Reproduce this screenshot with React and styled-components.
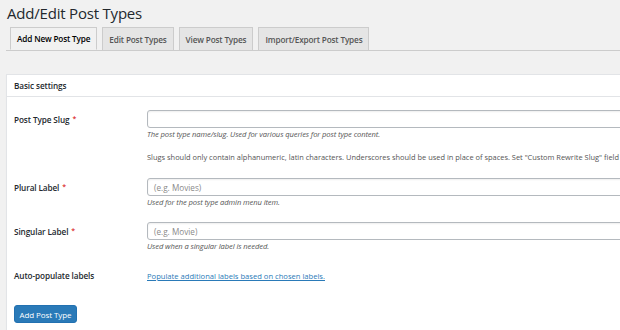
import React from 'react';
import styled, { createGlobalStyle } from 'styled-components';

const GlobalStyle = createGlobalStyle`
  html, body {
    margin: 0;
    padding: 0;
    background: #f1f1f1;
    overflow: hidden;
  }
  body {
    font-family: "Open Sans", "Noto Sans", sans-serif;
    color: #23282d;
  }
`;

const Page = styled.div`
  width: 620px;
  height: 330px;
  overflow: hidden;
`;

const Title = styled.h1`
  margin: 0;
  padding: 3px 0 0 7px;
  font-size: 15px;
  line-height: 20px;
  font-weight: 400;
  letter-spacing: -0.2px;
  color: #23282d;
`;

const TabBar = styled.div`
  display: flex;
  gap: 5px;
  margin: 4px 0 0 6px;
  padding-left: 4px;
  border-bottom: 1px solid #ccc;
`;

const Tab = styled.div`
  height: 23px;
  box-sizing: border-box;
  padding: 0 6px;
  display: flex;
  align-items: center;
  font-size: 8.2px;
  font-weight: 600;
  letter-spacing: -0.15px;
  color: ${p => (p.$active ? '#000' : '#555')};
  background: ${p => (p.$active ? '#f1f1f1' : '#e5e5e5')};
  border: 1px solid #ccc;
  border-bottom: ${p => (p.$active ? '1px solid #f1f1f1' : 'none')};
  margin-bottom: ${p => (p.$active ? '-1px' : '0')};
`;

const Panel = styled.div`
  margin: 23px 0 0 6px;
  width: 700px;
  background: #fff;
  border: 1px solid #e2e4e7;
  border-right: none;
  box-shadow: 0 1px 1px rgba(0, 0, 0, 0.04);
`;

const PanelHeader = styled.div`
  height: 21px;
  display: flex;
  align-items: center;
  padding-left: 7px;
  font-size: 8.2px;
  font-weight: 600;
  letter-spacing: -0.1px;
  color: #23282d;
  border-bottom: 1px solid #e2e4e7;
`;

const Body = styled.div`
  padding: 13px 0 20px 7px;
`;

const Row = styled.div`
  display: grid;
  grid-template-columns: 133px 1fr;
  margin-top: ${p => p.$gap || 0}px;
`;

const Label = styled.div`
  font-size: 8.2px;
  font-weight: 600;
  letter-spacing: -0.1px;
  line-height: 18px;
  height: 18px;
  color: #23282d;
`;

const Req = styled.span`
  color: #dc3232;
  font-size: 7px;
  margin-left: 3px;
  vertical-align: 2px;
`;

const Input = styled.div`
  height: 18px;
  box-sizing: border-box;
  border: 1px solid #b4b9be;
  border-radius: 3px;
  box-shadow: inset 0 1px 2px rgba(0, 0, 0, 0.07);
  background: #fff;
  padding-left: 6px;
  display: flex;
  align-items: center;
  font-size: 8.2px;
  color: #8a8a8a;
`;

const Desc = styled.div`
  font-size: 7.6px;
  font-style: italic;
  line-height: 11px;
  height: 11px;
  margin-top: 1px;
  letter-spacing: -0.1px;
  color: #555;
`;

const Note = styled.div`
  font-size: 7.45px;
  line-height: 11px;
  height: 11px;
  margin-top: 12px;
  color: #555;
  white-space: nowrap;
`;

const Link = styled.a`
  display: block;
  font-size: 7.6px;
  line-height: 18px;
  height: 18px;
  color: #2a7ab8;
  text-decoration: underline;
`;

const Button = styled.button`
  display: block;
  margin-top: 20px;
  height: 18px;
  width: 63px;
  padding: 0;
  border: 1px solid #2271b1;
  border-radius: 3px;
  background: #2a7ab8;
  color: #fff;
  font-family: inherit;
  font-size: 8px;
  font-weight: 400;
  letter-spacing: -0.1px;
`;

export default function App() {
  return (
    <Page>
      <GlobalStyle />
      <Title>Add/Edit Post Types</Title>
      <TabBar>
        <Tab $active>Add New Post Type</Tab>
        <Tab>Edit Post Types</Tab>
        <Tab>View Post Types</Tab>
        <Tab>Import/Export Post Types</Tab>
      </TabBar>

      <Panel>
        <PanelHeader>Basic settings</PanelHeader>
        <Body>
          <Row>
            <Label>Post Type Slug<Req>*</Req></Label>
            <div>
              <Input />
              <Desc>The post type name/slug. Used for various queries for post type content.</Desc>
              <Note>
                Slugs should only contain alphanumeric, latin characters. Underscores should be used in place of spaces. Set "Custom Rewrite Slug" field
              </Note>
            </div>
          </Row>

          <Row $gap={15}>
            <Label>Plural Label<Req>*</Req></Label>
            <div>
              <Input>(e.g. Movies)</Input>
              <Desc>Used for the post type admin menu item.</Desc>
            </div>
          </Row>

          <Row $gap={14}>
            <Label>Singular Label<Req>*</Req></Label>
            <div>
              <Input>(e.g. Movie)</Input>
              <Desc>Used when a singular label is needed.</Desc>
            </div>
          </Row>

          <Row $gap={15}>
            <Label>Auto-populate labels</Label>
            <div>
              <Link href="#">Populate additional labels based on chosen labels.</Link>
            </div>
          </Row>

          <Button>Add Post Type</Button>
        </Body>
      </Panel>
    </Page>
  );
}
